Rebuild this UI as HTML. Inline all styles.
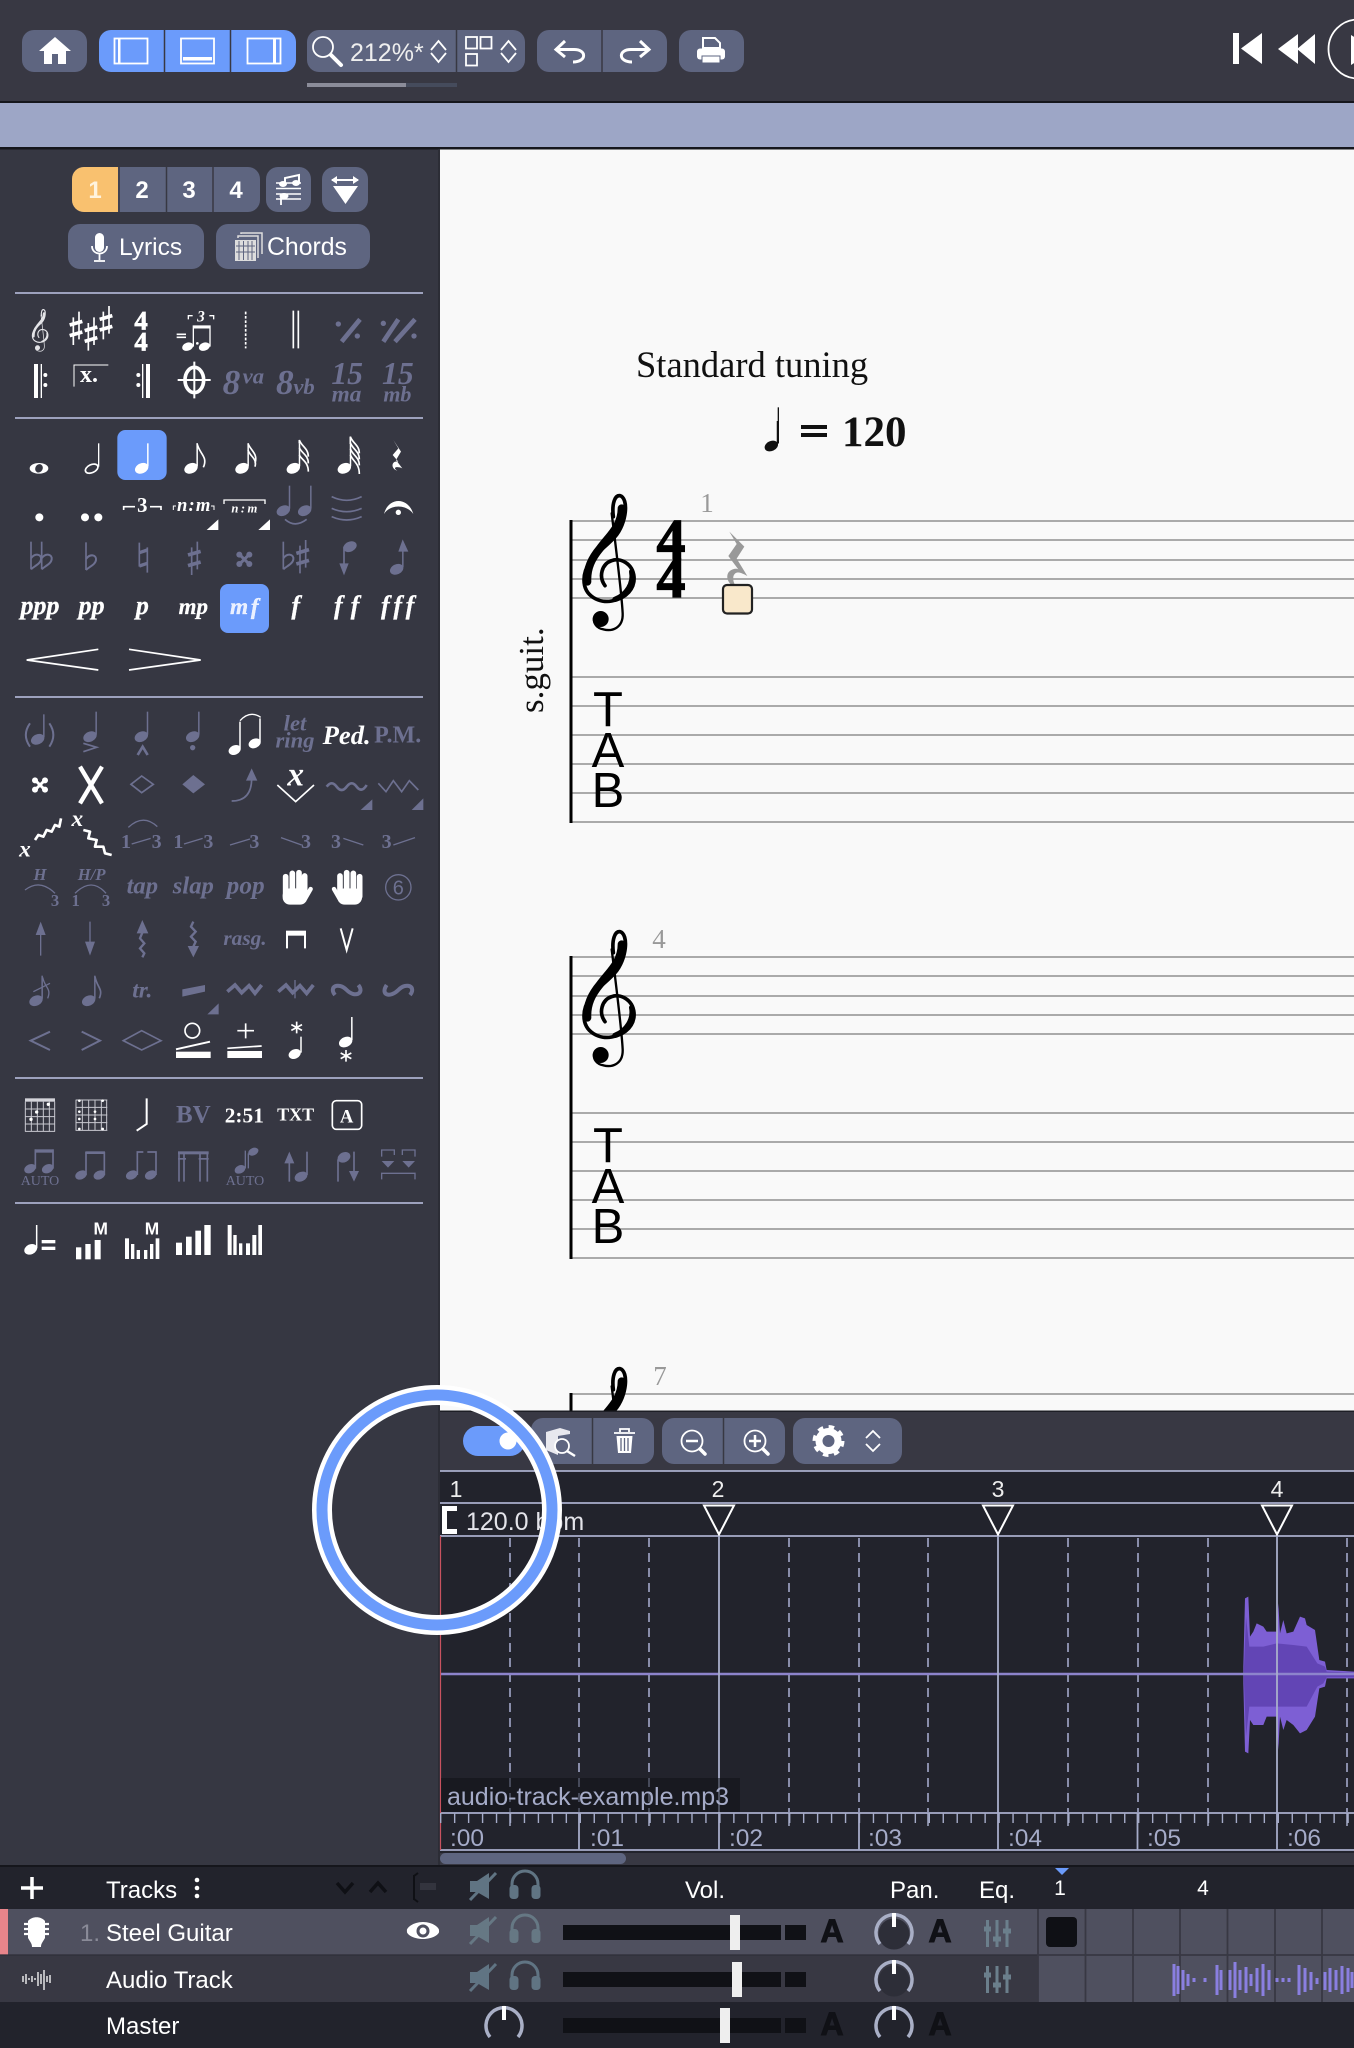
<!DOCTYPE html>
<html><head><meta charset="utf-8"><style>
html,body{margin:0;padding:0;background:#363742}
svg{display:block;filter:blur(.35px)}
text{font-family:"Liberation Sans",sans-serif}
.f,.f text{font-family:"Liberation Serif",serif}
.bi,.bi text{font-family:"Liberation Serif",serif;font-style:italic;font-weight:bold}
.b,.b text{font-family:"Liberation Serif",serif;font-weight:bold}
</style></head><body>
<svg width="1354" height="2048" viewBox="0 0 1354 2048" xmlns="http://www.w3.org/2000/svg">
<defs>
<g id="clef" fill="none" stroke="currentColor" stroke-linecap="round">
<path d="M400 590C395 550 405 525 420 527C447 535 440 610 405 650C370 690 312 720 312 780C312 830 360 850 395 843C440 835 465 805 462 770C458 730 420 712 395 722C365 732 355 770 375 797" stroke-width="11"/>
<path d="M425 565C425 620 385 650 360 685C335 715 320 745 322 785" stroke-width="24"/>
<path d="M455 755C462 790 440 825 405 838" stroke-width="16"/>
<path d="M395 580C405 660 425 820 428 880C430 925 395 935 370 928C350 925 340 910 342 895" stroke-width="7"/>
<circle cx="362" cy="897" r="24" fill="currentColor" stroke="none"/>
</g>
<g id="n"><ellipse rx="21" ry="15" transform="rotate(-25)" fill="currentColor"/><path d="M18.500 -6V-75" stroke="currentColor" stroke-width="4.500"/></g>
<g id="sh" fill="none" stroke="currentColor"><path d="M-8 -33V50M9 -50V33" stroke-width="5"/><path d="M-19 -10L19 -21M-19 22L19 11" stroke-width="11"/></g>
<g id="fl" fill="none" stroke="currentColor"><path d="M0 -45V38" stroke-width="5"/><path d="M0 5C12 -12 32 -8 30 8C28 22 10 28 0 38" stroke-width="6"/></g>
<g id="dx" fill="currentColor"><path d="M-15 -15L15 15M15 -15L-15 15" stroke="currentColor" stroke-width="9"/><circle cx="-15" cy="-14" r="9"/><circle cx="15" cy="-14" r="9"/><circle cx="-15" cy="14" r="9"/><circle cx="15" cy="14" r="9"/></g>
<g id="spk"><path d="M-13 -6H-6L6 -14V12L-6 5H-13Z" fill="currentColor"/><path d="M-13 13L13 -14" stroke="currentColor" stroke-width="3"/></g>
<g id="hp"><path d="M-13 6V-1A12.500 12.500 0 0 1 13 -1V6" fill="none" stroke="currentColor" stroke-width="3"/><rect x="-15.500" y="0" width="9" height="14" rx="3.500" fill="currentColor"/><rect x="6.500" y="0" width="9" height="14" rx="3.500" fill="currentColor"/></g>
<g id="eq" stroke="currentColor" stroke-width="3"><path d="M-9.500 -13V14M0 -13V14M10 -13V14"/><path d="M-13 -4H-6M-4 6H4M6 -2H14" stroke-width="5"/></g>
<g id="knob"><path d="M-14 12A18 18 0 1 1 14 12" fill="none" stroke="#a9afc6" stroke-width="3.500"/><path d="M0 -19V-5" stroke="#fff" stroke-width="4"/></g>
</defs>

<rect width="1354" height="2048" fill="#363742"/>
<!-- score page -->
<rect x="440" y="149" width="914" height="1262" fill="#f9f9f9"/>
<g stroke="#8f8f8f" stroke-width="1.400">
<path d="M571 521H1354M571 540H1354M571 560H1354M571 579H1354M571 598H1354M571 677H1354M571 706H1354M571 735H1354M571 764H1354M571 793H1354M571 822H1354"/>
<path d="M571 957H1354M571 976H1354M571 996H1354M571 1015H1354M571 1034H1354M571 1113H1354M571 1142H1354M571 1171H1354M571 1200H1354M571 1229H1354M571 1258H1354"/>
<path d="M571 1394H1354"/>
</g>
<path d="M571 520V823M571 956V1259M571 1393V1412" stroke="#000" stroke-width="3"/>
<text class="f" x="636" y="377" font-size="36.500" fill="#111">Standard tuning</text>
<g transform="translate(480,320) scale(.33333)"><use href="#n" x="874" y="378" color="#111"/><path d="M895 262V370" stroke="#111" stroke-width="4"/></g>
<path d="M801 427H827M801 435H827" stroke="#111" stroke-width="4"/>
<text class="b" x="842" y="446" font-size="43" fill="#111">120</text>
<text class="f" x="707" y="512" font-size="27" fill="#999" text-anchor="middle">1</text>
<g transform="translate(480,320) scale(.33333)"><use href="#clef" color="#000"/></g>
<g transform="translate(480,756) scale(.33333)"><use href="#clef" color="#000"/></g>
<g transform="translate(480,1193) scale(.33333)"><use href="#clef" color="#000"/></g>
<text class="b" x="671" y="559" font-size="58" text-anchor="middle" fill="#000" stroke="#000" stroke-width="1.200">4</text>
<text class="b" x="671" y="597" font-size="58" text-anchor="middle" fill="#000" stroke="#000" stroke-width="1.200">4</text>
<g transform="translate(480,320) scale(.33333)"><path d="M748 635L793 680L770 716L802 768C780 755 765 752 760 770C758 785 765 797 772 803C750 800 735 775 745 758C755 745 770 745 775 748L745 708L770 672Z" fill="#999"/></g>
<rect x="723" y="585" width="29" height="28.500" rx="4" fill="#f9e8cb" stroke="#222" stroke-width="2.200"/>
<text class="f" transform="translate(543,713) rotate(-90)" font-size="35" fill="#111">s.guit.</text>
<g font-size="49" fill="#000" text-anchor="middle"><text x="608" y="726">T</text><text x="608" y="767">A</text><text x="608" y="807">B</text></g>
<text class="f" x="659" y="948" font-size="27" fill="#999" text-anchor="middle">4</text>
<g font-size="49" fill="#000" text-anchor="middle"><text x="608" y="1162">T</text><text x="608" y="1203">A</text><text x="608" y="1243">B</text></g>
<text class="f" x="660" y="1385" font-size="27" fill="#999" text-anchor="middle">7</text>

<!-- top bars -->
<rect width="1354" height="101" fill="#383843"/>
<rect y="101" width="1354" height="2" fill="#15161c"/>
<rect y="103" width="1354" height="44" fill="#9da6c6"/>
<rect y="147" width="1354" height="2.500" fill="#15161c"/>
<rect x="438" y="149" width="2" height="1716" fill="#2c2d36"/>

<!-- top toolbar -->
<rect x="22" y="30" width="65" height="42" rx="12" fill="#5e6580"/>
<path d="M55 37L71 51H66V64H58V54H52V64H44V51H39Z" fill="#fff"/>
<rect x="99" y="30" width="197" height="42" rx="12" fill="#6b9bfb"/>
<path d="M164.500 30V72M230.500 30V72" stroke="#383843" stroke-width="1.500"/>
<g fill="none" stroke="#fff" stroke-width="1.800">
<rect x="114.500" y="38.500" width="33" height="25"/><rect x="181" y="38.500" width="33" height="25"/><rect x="247.500" y="38.500" width="33" height="25"/>
</g>
<rect x="118" y="39" width="2.500" height="24" fill="#fff"/><rect x="183" y="57" width="29" height="3.500" fill="#fff"/><rect x="273" y="39" width="3" height="24" fill="#fff"/>
<rect x="307" y="30" width="218" height="42" rx="12" fill="#5e6580"/>
<path d="M456.500 30V72" stroke="#383843" stroke-width="1.500"/>
<circle cx="323" cy="47" r="10" fill="none" stroke="#fff" stroke-width="1.800"/>
<path d="M331 55L341 65" stroke="#fff" stroke-width="4" stroke-linecap="round"/>
<text x="350" y="61" font-size="25" fill="#eee">212%*</text>
<g fill="none" stroke="#fff" stroke-width="1.800">
<path d="M431 50L438.500 41L446 50M431 53L438.500 62L446 53"/>
<rect x="466" y="37" width="11" height="11.500"/><rect x="480.500" y="37" width="11" height="11.500"/><rect x="466" y="54" width="11" height="11.500"/>
<path d="M501 50L508.500 41L516 50M501 53L508.500 62L516 53"/>
</g>
<rect x="537" y="30" width="130" height="42" rx="12" fill="#5e6580"/>
<path d="M602 30V72" stroke="#383843" stroke-width="1.500"/>
<g fill="none" stroke="#fff" stroke-width="3">
<path d="M565 41L556 49.500L565 57M556 49.500H574C587 49.500 587 62 573 62"/>
<path d="M640 41L649 49.500L640 57M649 49.500H631C618 49.500 618 62 632 62"/>
</g>
<rect x="679" y="30" width="65" height="42" rx="12" fill="#5e6580"/>
<path d="M703 38H715L720 43V48H703Z" fill="none" stroke="#fff" stroke-width="2"/><rect x="697" y="48.500" width="28" height="11" rx="3" fill="#fff"/><rect x="702" y="56" width="18" height="7" fill="#fff" stroke="#5e6580" stroke-width="1"/>
<rect x="307" y="83" width="99" height="4" fill="#8b8c99"/><rect x="406" y="83" width="51" height="4" fill="#454b5c"/>
<!-- transport -->
<rect x="1233" y="33" width="6" height="31" fill="#fff"/><path d="M1262 33V64L1241 48.500Z" fill="#fff"/>
<path d="M1298 34V64L1278 49ZM1315 34V64L1297 49Z" fill="#fff"/>
<circle cx="1358" cy="49" r="29.500" fill="none" stroke="#fff" stroke-width="1.800"/>
<path d="M1351 35L1375 50L1351 65Z" fill="#fff"/>

<!-- sidebar head -->
<rect x="72" y="167" width="188" height="45" rx="12" fill="#5e6580"/>
<path d="M84 167H118V212H84A12 12 0 0 1 72 200V179A12 12 0 0 1 84 167Z" fill="#f9c16f"/>
<path d="M119 167V212M166.500 167V212M213 167V212" stroke="#383843" stroke-width="1.500"/>
<g font-size="24" font-weight="bold" fill="#fff" text-anchor="middle"><text x="95" y="198" fill="#fff3dd">1</text><text x="142" y="198">2</text><text x="189" y="198">3</text><text x="236" y="198">4</text></g>
<rect x="266" y="167" width="45" height="45" rx="12" fill="#5e6580"/>
<g stroke="#fff"><path d="M276 183H301M276 188.500H301M276 194H301M276 199H301" stroke-width="1.500"/><path d="M285 184V178L299 175V183" fill="none" stroke-width="2"/><ellipse cx="283" cy="184" rx="3.500" ry="2.500" fill="#fff"/><ellipse cx="296" cy="183" rx="3.500" ry="2.500" fill="#fff"/><path d="M281 205V197" stroke-width="1.800"/><ellipse cx="284" cy="196" rx="4" ry="2.500" fill="#fff"/></g>
<rect x="322" y="167" width="46" height="45" rx="12" fill="#5e6580"/>
<path d="M332 180H358" stroke="#fff" stroke-width="2"/><path d="M331 180L337 176V184ZM359 180L353 176V184ZM333 186H358L345.500 204Z" fill="#fff"/>
<rect x="68" y="224" width="136" height="45" rx="12" fill="#5e6580"/>
<rect x="216" y="224" width="154" height="45" rx="12" fill="#5e6580"/>
<rect x="95" y="233" width="9" height="19" rx="4.500" fill="#fff"/><path d="M92 246C92 256 107 256 107 246M99.500 254V260M94 261H105" fill="none" stroke="#fff" stroke-width="1.800"/>
<text x="119" y="255" font-size="24.500" fill="#fff">Lyrics</text>
<rect x="235" y="240" width="21" height="21" fill="#ddd"/><path d="M239 241V260M243.500 241V260M248 241V260M252 241V260M236 246H255M236 252H255" stroke="#5e6580" stroke-width="1"/><path d="M238 238V236H258V258M241 234V233H262V254" fill="none" stroke="#ddd" stroke-width="1.500"/>
<text x="267" y="255" font-size="24.800" fill="#fff">Chords</text>
<path d="M15 293H423M15 418H423M15 697H423M15 1078H423M15 1203H423" stroke="#9da1bd" stroke-width="2"/>

<!-- palette section 1-2 -->
<g transform="translate(0,280) scale(.33333)">
<use href="#clef" transform="translate(0.400,-74.700) scale(.31)" color="#e4e4e8"/>
<use href="#sh" x="228" y="145" color="#fff"/><use href="#sh" x="273" y="162" color="#fff"/><use href="#sh" x="318" y="128" color="#fff"/>
<g class="b" font-size="80" fill="#fff" text-anchor="middle" stroke="#fff" stroke-width="2"><text x="423" y="148">4</text><text x="423" y="212">4</text></g>
<g fill="none" stroke="#fff"><path d="M530 163H558M530 172H558" stroke-width="5"/><path d="M580 200V138H630V200" stroke-width="4"/><path d="M580 141H630" stroke-width="9"/><path d="M565 118V107H578M628 107H641V118" stroke-width="4"/></g>
<ellipse cx="563" cy="200" rx="17" ry="12" transform="rotate(-20 563 200)" fill="#fff"/><ellipse cx="613" cy="200" rx="17" ry="12" transform="rotate(-20 613 200)" fill="#fff"/><circle cx="592" cy="190" r="4" fill="#fff"/>
<text class="bi" x="603" y="124" font-size="46" fill="#fff" text-anchor="middle">3</text>
<path d="M737 95V205" stroke="#fff" stroke-width="5" stroke-dasharray="8 5"/>
<path d="M880 92V205M895 92V205" stroke="#fff" stroke-width="5"/>
<g stroke="#6d7090" stroke-width="14"><path d="M1025 185L1080 118M1150 185L1195 118M1185 185L1245 118"/></g>
<g fill="#6d7090"><circle cx="1015" cy="132" r="8"/><circle cx="1072" cy="168" r="8"/><circle cx="1150" cy="130" r="8"/><circle cx="1242" cy="168" r="8"/></g>
<rect x="102" y="252" width="12" height="102" fill="#fff"/><rect x="122" y="252" width="4" height="102" fill="#fff"/><circle cx="136" cy="285" r="6" fill="#fff"/><circle cx="136" cy="315" r="6" fill="#fff"/>
<path d="M222 320V255H325" fill="none" stroke="#fff" stroke-width="3"/>
<text class="b" x="240" y="306" font-size="72" fill="#fff">x.</text>
<circle cx="415" cy="285" r="6" fill="#fff"/><circle cx="415" cy="315" r="6" fill="#fff"/><rect x="426" y="252" width="4" height="102" fill="#fff"/><rect x="438" y="252" width="12" height="102" fill="#fff"/>
<ellipse cx="583" cy="300" rx="28" ry="38" fill="none" stroke="#fff" stroke-width="11"/><path d="M583 245V355M533 300H632" stroke="#fff" stroke-width="6"/>
<g class="bi" fill="#6d7090"><text x="668" y="342" font-size="106">8</text><text x="728" y="310" font-size="68">va</text>
<text x="828" y="342" font-size="106">8</text><text x="880" y="342" font-size="68">vb</text>
<text x="994" y="312" font-size="95">15</text><text x="995" y="365" font-size="70">ma</text>
<text x="1146" y="312" font-size="95">15</text><text x="1150" y="365" font-size="66">mb</text></g>

<ellipse cx="117" cy="565" rx="28" ry="16" fill="#fff"/><ellipse cx="117" cy="565" rx="11" ry="13" transform="rotate(30 117 565)" fill="#363742"/>
<ellipse cx="275" cy="566" rx="20" ry="12" transform="rotate(-25 275 566)" fill="none" stroke="#fff" stroke-width="5"/><path d="M296 490V560" stroke="#fff" stroke-width="4"/>
<rect x="352" y="450" width="148" height="150" rx="24" fill="#6b9bfb"/>
<use href="#n" x="425" y="565" color="#fff"/>
<use href="#n" x="573" y="565" color="#fff"/><path d="M591 490C598 522 625 530 610 562" fill="none" stroke="#fff" stroke-width="5"/>
<use href="#n" x="726" y="565" color="#fff"/><path d="M744 490C750 510 775 520 765 550M744 510C750 530 772 535 765 560" fill="none" stroke="#fff" stroke-width="5"/>
<use href="#n" x="880" y="565" color="#fff"/><path d="M898 490V480C905 500 925 505 925 530M898 503C905 520 925 525 925 550M898 525C905 540 925 545 925 575" fill="none" stroke="#fff" stroke-width="5"/>
<use href="#n" x="1033" y="565" color="#fff"/><path d="M1051 492V470C1058 490 1078 495 1078 520M1051 488C1058 508 1078 513 1078 538M1051 506C1058 526 1078 531 1078 556M1051 524C1058 544 1078 549 1078 582" fill="none" stroke="#fff" stroke-width="5"/>
<path d="M1180 480L1203 515L1188 540L1207 565C1192 558 1175 562 1192 572C1170 565 1175 540 1195 545L1178 525L1195 505Z" fill="#fff"/>

<circle cx="118" cy="712" r="12" fill="#fff"/><circle cx="255" cy="712" r="12" fill="#fff"/><circle cx="295" cy="712" r="12" fill="#fff"/>
<path d="M371 690V680H405M450 680H483V690" fill="none" stroke="#fff" stroke-width="5"/>
<text class="b" x="427" y="696" font-size="62" fill="#fff" text-anchor="middle">3</text>
<text class="bi" x="581" y="693" font-size="56" fill="#fff" text-anchor="middle" textLength="100" lengthAdjust="spacing">n:m</text>
<path d="M520 690V678H528M633 678H642V690" fill="none" stroke="#fff" stroke-width="3"/>
<path d="M620 750H655V718Z" fill="#fff"/>
<path d="M672 672V660H795V672" fill="none" stroke="#fff" stroke-width="4"/>
<text class="bi" x="733" y="698" font-size="38" fill="#fff" text-anchor="middle" textLength="78" lengthAdjust="spacing">n:m</text>
<path d="M775 750H810V718Z" fill="#fff"/>
<use href="#n" x="850" y="692" color="#6d7090"/><use href="#n" x="914" y="692" color="#6d7090"/>
<g fill="none" stroke="#6d7090" stroke-width="5"><path d="M855 718Q885 745 920 718M995 650Q1040 672 1085 650M995 685Q1040 705 1085 685M995 710Q1040 730 1085 710"/></g>
<path d="M1152 702C1165 650 1225 650 1240 702C1220 672 1170 672 1152 702Z" fill="#fff"/><circle cx="1195" cy="697" r="8" fill="#fff"/>

<use href="#fl" x="93" y="830" color="#6d7090"/><use href="#fl" x="125" y="830" color="#6d7090"/><use href="#fl" x="258" y="832" color="#6d7090"/>
<g stroke="#6d7090" fill="none"><path d="M418 788V860M442 802V878" stroke-width="5"/><path d="M418 818L442 810M418 858L442 850" stroke-width="10"/></g>
<use href="#sh" x="583" y="835" color="#6d7090"/>
<use href="#dx" x="733" y="838" color="#6d7090"/>
<use href="#fl" x="850" y="830" color="#6d7090"/><use href="#sh" x="908" y="830" color="#6d7090"/>
<ellipse cx="1050" cy="800" rx="21" ry="15" transform="rotate(-25 1050 800)" fill="#6d7090"/><path d="M1032 800V860" stroke="#6d7090" stroke-width="5"/><path d="M1018 850H1046L1032 886Z" fill="#6d7090"/>
<use href="#n" x="1190" y="868" color="#6d7090"/><path d="M1195 815H1225L1208 778Z" fill="#6d7090"/>

<rect x="660" y="912" width="147" height="147" rx="24" fill="#6b9bfb"/>
<g class="bi" font-size="78" fill="#fff" text-anchor="middle" stroke="#fff" stroke-width=".8"><text x="120" y="1002">ppp</text><text x="275" y="1002">pp</text><text x="427" y="1002">p</text><text x="580" y="1002" font-size="69">mp</text><text x="733" y="1002" font-size="70" fill="#eaf0ff" textLength="86" lengthAdjust="spacing">mf</text><text x="887" y="1002">f</text><text x="1040" y="1002" textLength="76" lengthAdjust="spacing">ff</text><text x="1193" y="1002" textLength="100" lengthAdjust="spacing">fff</text></g>
<g fill="none" stroke="#fff" stroke-width="5"><path d="M295 1108L80 1140L295 1170M387 1108L602 1140L387 1170"/></g>
</g>

<!-- palette section 3 -->
<g transform="translate(0,690) scale(.33333)">
<path d="M90 100Q65 135 90 170M148 100Q172 135 148 170" fill="none" stroke="#6d7090" stroke-width="6"/>
<use href="#n" x="113" y="148" color="#6d7090"/>
<use href="#n" x="270" y="140" color="#6d7090"/><path d="M250 160L290 172L250 185" fill="none" stroke="#6d7090" stroke-width="5"/>
<use href="#n" x="424" y="140" color="#6d7090"/><path d="M413 195L428 170L443 195" fill="none" stroke="#6d7090" stroke-width="8"/>
<use href="#n" x="578" y="140" color="#6d7090"/><circle cx="578" cy="173" r="8" fill="#6d7090"/>
<ellipse cx="704" cy="180" rx="19" ry="14" transform="rotate(-25 704 180)" fill="#fff"/><ellipse cx="764" cy="160" rx="19" ry="14" transform="rotate(-25 764 160)" fill="#fff"/><path d="M720 175V95M780 155V85" stroke="#fff" stroke-width="4.500"/><path d="M720 92Q750 60 782 82" fill="none" stroke="#fff" stroke-width="4"/>
<g class="bi" fill="#6d7090" text-anchor="middle"><text x="885" y="122" font-size="68">let</text><text x="885" y="173" font-size="68">ring</text></g>
<text class="bi" x="1040" y="162" font-size="80" fill="#fff" text-anchor="middle">Ped.</text>
<text class="b" x="1193" y="157" font-size="72" fill="#6d7090" text-anchor="middle">P.M.</text>

<use href="#dx" x="120" y="285" color="#fff"/>
<path d="M240 230L306 340M306 230L240 340" stroke="#fff" stroke-width="13"/>
<path d="M393 283L425 258L460 283L425 308Z" fill="none" stroke="#6d7090" stroke-width="5"/>
<path d="M547 283L580 255L615 283L580 310Z" fill="#6d7090"/>
<path d="M695 333C735 333 755 310 755 265" fill="none" stroke="#6d7090" stroke-width="5"/><path d="M738 272H772L755 235Z" fill="#6d7090"/>
<text class="bi" x="887" y="287" font-size="100" fill="#fff" text-anchor="middle">x</text><path d="M832 285L887 335L942 285" fill="none" stroke="#fff" stroke-width="5"/>
<path d="M980 290Q995 270 1010 290T1040 290T1070 290T1100 285" fill="none" stroke="#6d7090" stroke-width="8"/><path d="M1082 360H1117V328Z" fill="#6d7090"/>
<path d="M1135 280L1158 305L1180 272L1205 305L1228 272L1255 300" fill="none" stroke="#6d7090" stroke-width="5"/><path d="M1235 360H1270V325Z" fill="#6d7090"/>

<text class="bi" x="75" y="500" font-size="70" fill="#fff" text-anchor="middle">x</text><text class="bi" x="232" y="408" font-size="70" fill="#fff" text-anchor="middle">x</text>
<path d="M105 450L115 435L130 440L140 420L155 425L165 405L178 410L183 385M250 420L270 425L265 445L290 450L285 470L310 470L315 490L335 495" fill="none" stroke="#fff" stroke-width="8" stroke-linejoin="round"/>
<g fill="none" stroke="#6d7090" stroke-width="4"><path d="M385 412Q430 370 472 410M395 462L452 445M552 462L608 445M690 465L750 447M843 443L905 465M1030 445L1090 465M1180 465L1245 443"/></g>
<g class="b" font-size="60" fill="#6d7090" text-anchor="middle"><text x="378" y="474">1</text><text x="470" y="474">3</text><text x="535" y="474">1</text><text x="625" y="474">3</text><text x="763" y="474">3</text><text x="918" y="474">3</text><text x="1008" y="474">3</text><text x="1160" y="474">3</text></g>

<g class="bi" fill="#6d7090" text-anchor="middle"><text x="120" y="570" font-size="50">H</text><text x="275" y="570" font-size="50">H/P</text><text x="427" y="610" font-size="74">tap</text><text x="580" y="610" font-size="74">slap</text><text x="737" y="610" font-size="76">pop</text></g>
<path d="M75 600Q120 565 165 610M225 610Q275 560 318 610" fill="none" stroke="#6d7090" stroke-width="4"/>
<g class="b" font-size="50" fill="#6d7090" text-anchor="middle"><text x="165" y="648">3</text><text x="227" y="648">1</text><text x="318" y="648">3</text></g>
<g stroke="#fff" stroke-linecap="round" fill="#fff"><path d="M857 560V620M877 550V620M897 548V620M914 558V620" stroke-width="17"/><rect x="848" y="595" width="74" height="49" rx="22" stroke="none"/><path d="M916 625L932 597" stroke-width="13"/>
<path d="M1020 558V620M1040 548V620M1060 550V620M1079 560V620" stroke-width="17"/><rect x="1012" y="595" width="74" height="49" rx="22" stroke="none"/><path d="M1018 625L1002 597" stroke-width="13"/></g>
<circle cx="1195" cy="592" r="38" fill="none" stroke="#6d7090" stroke-width="4"/>
<text x="1195" y="614" font-size="60" fill="#6d7090" text-anchor="middle">6</text>

<g stroke="#6d7090" stroke-width="4" fill="none"><path d="M122 730V797M270 695V760"/><path d="M427 728L420 745L433 760L420 775L433 790L427 802M580 695L573 710L587 725L573 740L587 755L580 770" stroke-width="7"/></g>
<g fill="#6d7090"><path d="M107 735H137L122 695ZM255 755H285L270 797ZM410 730H445L427 690ZM563 768H597L580 802Z"/></g>
<text class="bi" x="735" y="765" font-size="64" fill="#6d7090" text-anchor="middle">rasg.</text>
<rect x="858" y="722" width="60" height="15" fill="#fff"/><path d="M861 725V775M915 725V775" stroke="#fff" stroke-width="6"/>
<path d="M1022 715L1040 780L1058 715" fill="none" stroke="#fff" stroke-width="6"/>

<use href="#n" x="108" y="932" color="#6d7090"/><path d="M128 862C135 895 155 895 143 925M100 905L150 880" fill="none" stroke="#6d7090" stroke-width="4"/>
<use href="#n" x="266" y="932" color="#6d7090"/><path d="M285 860C292 895 310 895 298 925" fill="none" stroke="#6d7090" stroke-width="5"/>
<text class="bi" x="427" y="922" font-size="70" fill="#6d7090" text-anchor="middle">tr.</text>
<path d="M547 898L615 885V905L547 920ZM622 973H656V940Z" fill="#6d7090"/>
<g fill="none" stroke="#6d7090"><path d="M682 905L705 885L725 908L747 887L765 910L785 885M835 905L858 885L878 908L900 887L920 910L940 885" stroke-width="11"/><path d="M885 870V925" stroke-width="4"/>
<path d="M1005 915C985 890 1015 875 1040 900C1065 925 1095 910 1075 885M1160 885C1140 915 1170 925 1195 900C1220 875 1250 890 1230 915" stroke-width="12"/>
<path d="M150 1025L92 1052L150 1080M245 1025L300 1052L245 1080" stroke-width="6"/><path d="M370 1052L425 1022L483 1052L425 1080Z" stroke-width="5"/></g>
<circle cx="577" cy="1022" r="22" fill="none" stroke="#fff" stroke-width="5"/>
<path d="M528 1078L630 1055" stroke="#fff" stroke-width="6"/><rect x="528" y="1085" width="104" height="19" fill="#fff"/>
<path d="M712 1022H762M737 1000V1045" stroke="#fff" stroke-width="5"/>
<path d="M682 1075L785 1068" stroke="#fff" stroke-width="5"/><rect x="682" y="1083" width="104" height="21" fill="#fff"/>
<path d="M890 995V1030M874 1004L906 1021M906 1004L874 1021" stroke="#fff" stroke-width="5"/>
<ellipse cx="884" cy="1092" rx="19" ry="14" transform="rotate(-25 884 1092)" fill="#fff"/><path d="M903 1040V1088" stroke="#fff" stroke-width="4.500"/>
<path d="M1038 1080V1115M1022 1089L1054 1106M1054 1089L1022 1106" stroke="#fff" stroke-width="5"/>
<use href="#n" x="1037" y="1056" color="#fff"/>
</g>

<!-- palette section 4 -->
<g transform="translate(0,1060) scale(.33333)">
<rect x="75" y="115" width="90" height="10" fill="#d4d4da"/>
<path d="M76 125V215M94 125V215M112 125V215M130 125V215M148 125V215M164 125V215M75 147H165M75 170H165M75 192H165M75 214H165" stroke="#c8c8d0" stroke-width="3"/>
<circle cx="145" cy="133" r="5" fill="#fff"/><circle cx="110" cy="156" r="5" fill="#fff"/><circle cx="93" cy="178" r="5" fill="#fff"/>
<path d="M228 120V212M247 120V212M266 120V212M285 120V212M304 120V212M320 120V212M227 120H322M227 142H322M227 165H322M227 188H322M227 211H322" stroke="#c8c8d0" stroke-width="3"/>
<g fill="#fff"><circle cx="238" cy="122" r="4"/><circle cx="308" cy="122" r="4"/><circle cx="238" cy="155" r="4"/><circle cx="285" cy="155" r="4"/><circle cx="238" cy="177" r="4"/><circle cx="285" cy="177" r="4"/><circle cx="238" cy="207" r="4"/><circle cx="308" cy="207" r="4"/></g>
<path d="M410 212L440 192V115" fill="none" stroke="#fff" stroke-width="6"/>
<text class="b" x="580" y="188" font-size="75" fill="#6d7090" text-anchor="middle">BV</text>
<text class="b" x="733" y="187" font-size="64" fill="#fff" text-anchor="middle">2:51</text>
<text class="b" x="887" y="182" font-size="54" fill="#fff" text-anchor="middle">TXT</text>
<rect x="997" y="122" width="88" height="86" rx="12" fill="none" stroke="#fff" stroke-width="5"/>
<text class="b" x="1040" y="187" font-size="56" fill="#fff" text-anchor="middle">A</text>

<g fill="#6d7090" stroke="#6d7090">
<ellipse cx="90" cy="326" rx="18" ry="13" transform="rotate(-25 90 326)" stroke="none"/><ellipse cx="143" cy="326" rx="18" ry="13" transform="rotate(-25 143 326)" stroke="none"/><path d="M106 326V268M159 326V268" stroke-width="5" fill="none"/><rect x="104" y="268" width="57" height="10" stroke="none"/>
<ellipse cx="243" cy="345" rx="18" ry="13" transform="rotate(-25 243 345)" stroke="none"/><ellipse cx="298" cy="345" rx="18" ry="13" transform="rotate(-25 298 345)" stroke="none"/><path d="M258 345V276M313 345V276" stroke-width="5" fill="none"/><rect x="256" y="274" width="59" height="8" stroke="none"/>
<ellipse cx="395" cy="345" rx="18" ry="13" transform="rotate(-25 395 345)" stroke="none"/><ellipse cx="452" cy="345" rx="18" ry="13" transform="rotate(-25 452 345)" stroke="none"/><path d="M412 345V276H430M468 345V276H442" stroke-width="5" fill="none"/>
<path d="M537 365V276M552 365V276M600 365V276M622 365V276" stroke-width="5" fill="none"/><rect x="534" y="274" width="92" height="9" stroke="none"/><rect x="534" y="294" width="24" height="5" stroke="none"/><rect x="596" y="294" width="30" height="5" stroke="none"/>
<ellipse cx="720" cy="328" rx="17" ry="12" transform="rotate(-25 720 328)" stroke="none"/><path d="M736 325V272M745 325V280" stroke-width="4" fill="none"/><ellipse cx="760" cy="275" rx="16" ry="11" transform="rotate(-25 760 275)" stroke="none"/>
<path d="M868 365V300" stroke-width="5" fill="none"/><path d="M853 310H883L868 275Z" stroke="none"/><ellipse cx="903" cy="350" rx="20" ry="14" transform="rotate(-25 903 350)" stroke="none"/><path d="M921 345V275" stroke-width="5" fill="none"/>
<ellipse cx="1032" cy="292" rx="20" ry="15" transform="rotate(-25 1032 292)" stroke="none"/><path d="M1014 298V365M1062 275V340" stroke-width="5" fill="none"/><path d="M1047 333H1077L1062 365Z" stroke="none"/>
<path d="M1145 290V270H1183V285M1207 285V270H1245V290M1145 358V340H1245V358" stroke-width="4" fill="none"/><path d="M1145 303H1183L1164 323ZM1207 303H1245L1226 323Z" stroke="none"/>
</g>
<g class="f" font-size="42" fill="#6d7090" text-anchor="middle"><text x="120" y="375">AUTO</text><text x="735" y="375">AUTO</text></g>

<ellipse cx="92" cy="568" rx="20" ry="15" transform="rotate(-25 92 568)" fill="#fff"/><path d="M110 565V495" stroke="#fff" stroke-width="4.500"/><rect x="125" y="540" width="41" height="10" fill="#fff"/><rect x="125" y="560" width="41" height="10" fill="#fff"/>
<g font-size="52" font-weight="bold" fill="#fff" text-anchor="middle"><text x="302" y="524">M</text><text x="456" y="524">M</text></g>
<g fill="#fff"><rect x="228" y="562" width="16" height="36"/><rect x="256" y="552" width="16" height="46"/><rect x="284" y="540" width="18" height="58"/>
<rect x="375" y="535" width="12" height="62"/><rect x="393" y="552" width="10" height="45"/><rect x="410" y="570" width="10" height="27"/><rect x="432" y="570" width="10" height="27"/><rect x="450" y="552" width="10" height="45"/><rect x="467" y="535" width="11" height="62"/>
<rect x="528" y="548" width="18" height="37"/><rect x="558" y="530" width="17" height="55"/><rect x="586" y="512" width="17" height="73"/><rect x="613" y="495" width="19" height="90"/>
<rect x="683" y="495" width="12" height="90"/><rect x="700" y="525" width="10" height="60"/><rect x="717" y="550" width="10" height="35"/><rect x="738" y="550" width="12" height="35"/><rect x="757" y="525" width="12" height="60"/><rect x="775" y="495" width="11" height="90"/></g>
</g>

<!-- lower panel -->
<rect x="440" y="1411" width="914" height="454" fill="#383843"/>
<rect x="440" y="1410.500" width="914" height="1.500" fill="#1d1e25"/>
<rect x="463" y="1426" width="62" height="30" rx="15" fill="#6b9bfb"/><circle cx="508" cy="1441" r="8.500" fill="#fff"/>
<rect x="531" y="1418" width="123" height="46" rx="12" fill="#5e6580"/><path d="M592.500 1418V1464" stroke="#383843" stroke-width="1.500"/>
<path d="M546 1432L560 1428L570 1431V1434L558 1436V1455L546 1450Z" fill="#e8e8ee"/>
<circle cx="562" cy="1446" r="7" fill="#5e6580" stroke="#fff" stroke-width="1.800"/><path d="M567 1451L575 1456" stroke="#fff" stroke-width="2.500"/>
<path d="M614 1433H635M620 1432V1429H629V1432" fill="none" stroke="#fff" stroke-width="1.800"/><path d="M616.500 1436H632.500L631 1453H618Z" fill="#fff"/><path d="M621 1438V1451M624.500 1438V1451M628 1438V1451" stroke="#5e6580" stroke-width="1.300"/>
<rect x="662" y="1418" width="123" height="46" rx="12" fill="#5e6580"/><path d="M723.500 1418V1464" stroke="#383843" stroke-width="1.500"/>
<circle cx="692" cy="1441" r="10.500" fill="none" stroke="#fff" stroke-width="1.800"/><path d="M686 1441H698" stroke="#fff" stroke-width="2.500"/><path d="M700 1449L705 1454" stroke="#fff" stroke-width="3.500" stroke-linecap="round"/>
<circle cx="755" cy="1441" r="10.500" fill="none" stroke="#fff" stroke-width="1.800"/><path d="M749 1441H761M755 1435V1447" stroke="#fff" stroke-width="2.500"/><path d="M763 1449L768 1454" stroke="#fff" stroke-width="3.500" stroke-linecap="round"/>
<rect x="793" y="1418" width="109" height="46" rx="12" fill="#5e6580"/>
<circle cx="828.500" cy="1441" r="9.500" fill="none" stroke="#fff" stroke-width="7"/><circle cx="828.500" cy="1441" r="14" fill="none" stroke="#fff" stroke-width="4" stroke-dasharray="5.500 5.500"/>
<path d="M866 1438L873 1431L880 1438M866 1444L873 1451L880 1444" fill="none" stroke="#fff" stroke-width="1.800"/>

<rect x="440" y="1471" width="914" height="382" fill="#22232c"/>
<path d="M440 1471H1354M440 1503H1354M440 1536H1354M440 1813H1354M440 1850H1354" stroke="#a9aecb" stroke-width="1.800"/>
<g font-size="23" fill="#eee" text-anchor="middle"><text x="456" y="1497">1</text><text x="718" y="1497">2</text><text x="998" y="1497">3</text><text x="1277" y="1497">4</text></g>
<g fill="none" stroke="#fff" stroke-width="2"><path d="M704 1505.500H734L719 1534.500ZM983 1505.500H1013L998 1534.500ZM1262 1505.500H1292L1277 1534.500Z"/></g>
<rect x="442" y="1506" width="15" height="28" fill="#fff"/><rect x="447" y="1511" width="10" height="18" fill="#22232c"/>
<text x="466" y="1530" font-size="25" fill="#e4e4ea">120.0 bpm</text>
<g stroke="#9599b8" stroke-width="1.800" stroke-dasharray="9 6"><path d="M510 1538V1813M579 1538V1813M649 1538V1813M789 1538V1813M859 1538V1813M928 1538V1813M1068 1538V1813M1138 1538V1813M1208 1538V1813M1347 1538V1813"/></g>
<g transform="translate(900,1450) scale(.33333)">
<path d="M1030 650L1035 445L1045 440L1050 560L1060 545L1070 520L1090 530L1100 545L1130 545L1135 460L1140 550L1150 510L1160 550L1180 545L1200 500L1215 505L1220 525L1245 540L1258 630L1275 635L1280 660L1362 665V685L1280 685L1275 710L1258 715L1245 800L1220 840L1200 850L1180 825L1160 810L1150 840L1140 800L1135 900L1130 800L1100 800L1090 825L1060 825L1050 810L1045 910L1035 905L1030 700Z" fill="#7d5fd4"/>
<path d="M1032 650L1038 500L1048 590L1090 590L1130 580L1180 585L1220 590L1252 640L1275 650L1280 665L1362 668V682L1280 682L1270 700L1252 710L1220 770L1180 770L1130 770L1090 770L1048 770L1038 860L1032 700Z" fill="#6245b5"/>
</g>
<path d="M440 1674H1354" stroke="#8d84cc" stroke-width="2.500"/>
<path d="M719 1536V1813M998 1536V1813M1277 1536V1813" stroke="#a9aecb" stroke-width="1.800"/>
<path d="M440.500 1536V1850" stroke="#c8525f" stroke-width="1.200"/>
<rect x="441" y="1778" width="299" height="34" fill="#111218" opacity=".55"/>
<text x="447" y="1805" font-size="25" fill="#a5abc8">audio-track-example.mp3</text>
<path d="M440 1818H1354" stroke="#a5abc8" stroke-width="10" stroke-dasharray="1.400 12.560"/>
<path d="M510 1813V1826M649 1813V1826M789 1813V1826M928 1813V1826M1068 1813V1826M1208 1813V1826M1347 1813V1826" stroke="#a5abc8" stroke-width="1.500"/>
<path d="M579 1813V1850M719 1813V1850M859 1813V1850M998 1813V1850M1137.500 1813V1850M1277 1813V1850" stroke="#a5abc8" stroke-width="1.800"/>
<g font-size="24.500" fill="#a5abc8"><text x="450" y="1846">:00</text><text x="590" y="1846">:01</text><text x="729" y="1846">:02</text><text x="868" y="1846">:03</text><text x="1008" y="1846">:04</text><text x="1147" y="1846">:05</text><text x="1287" y="1846">:06</text></g>
<rect x="440" y="1853" width="186" height="11" rx="5.500" fill="#5e6580"/>

<!-- tracks -->
<rect y="1865" width="1354" height="2.500" fill="#15161c"/>
<rect y="1867" width="1354" height="42" fill="#22232c"/>
<rect y="1909" width="1354" height="46" fill="#4f505f"/>
<rect y="1955" width="1354" height="47" fill="#383843"/>
<rect y="2002" width="1354" height="46" fill="#22232c"/>
<rect y="1909" width="8" height="46" fill="#e8858b"/>
<rect x="1038" y="1955" width="316" height="47" fill="#4f505f"/>
<path d="M0 1955H1354" stroke="#2d2e38" stroke-width="1.200"/>
<path d="M1038 1909V2002M1085.500 1909V2002M1133 1909V2002M1180 1909V2002M1227.500 1909V2002M1275 1909V2002M1322 1909V2002" stroke="#383843" stroke-width="1.800"/>
<path d="M32 1877V1899M21 1888H43" stroke="#fff" stroke-width="3.500"/>
<g font-size="24" fill="#fff"><text x="106" y="1898">Tracks</text><text x="106" y="1941">Steel Guitar</text><text x="106" y="1988">Audio Track</text><text x="106" y="2034">Master</text>
<text x="685" y="1898">Vol.</text><text x="890" y="1898">Pan.</text><text x="979" y="1898">Eq.</text></g>
<text x="80" y="1941" font-size="24" fill="#8a8b98">1.</text>
<circle cx="197" cy="1880" r="2.300" fill="#fff"/><circle cx="197" cy="1888" r="2.300" fill="#fff"/><circle cx="197" cy="1896" r="2.300" fill="#fff"/>
<path d="M337 1883L345 1892L353 1883M370 1892L378 1883L386 1892" fill="none" stroke="#0f1015" stroke-width="3.500"/>
<path d="M414 1875V1900M414 1876L418 1873M414 1899L418 1902" fill="none" stroke="#0f1015" stroke-width="2"/><path d="M420 1883H436V1890H420Z" fill="#33343e"/>
<path d="M28 1925V1921C32 1916 41 1916 45 1921V1938C42 1943 41 1944 41 1947H32C32 1944 31 1943 28 1938Z" fill="#fff"/><path d="M24 1924H28M24 1929H28M24 1934H28M45 1924H49M45 1929H49M45 1934H49" stroke="#fff" stroke-width="2.200"/>
<path d="M23 1976V1982M26 1974V1984M29 1978V1980M32 1976V1982M35 1978V1980M38 1972V1986M41 1974V1984M44 1970V1990M47 1976V1982M50 1975V1983" stroke="#fff" stroke-width="1.300"/>
<path d="M423 1922C433 1922 440 1928 439 1931C440 1934 433 1939 423 1939C413 1939 406 1934 407 1931C406 1928 413 1922 423 1922Z" fill="#fff"/><circle cx="423" cy="1931" r="5" fill="none" stroke="#4f505f" stroke-width="3"/>
<use href="#spk" x="483" y="1887" color="#607483"/><use href="#hp" x="525" y="1885" color="#607483"/>
<use href="#spk" x="483" y="1931" color="#667884"/><use href="#hp" x="525" y="1929" color="#667884"/>
<use href="#spk" x="483" y="1978" color="#607483"/><use href="#hp" x="525" y="1976" color="#607483"/>
<g fill="#101116">
<rect x="563" y="1925" width="218" height="15"/><rect x="785" y="1925" width="21" height="15"/>
<rect x="563" y="1972" width="218" height="15"/><rect x="785" y="1972" width="21" height="15"/>
<rect x="563" y="2018" width="218" height="15"/><rect x="785" y="2018" width="21" height="15"/>
</g>
<g fill="#eee"><rect x="730" y="1915" width="10" height="35"/><rect x="732" y="1962" width="10" height="35"/><rect x="720" y="2008" width="10" height="35"/></g>
<g font-size="32" font-weight="bold" fill="#101116" text-anchor="middle" stroke="#101116" stroke-width="1"><text x="832" y="1942">A</text><text x="940" y="1942">A</text><text x="832" y="2035">A</text><text x="940" y="2035">A</text></g>
<circle cx="894" cy="1934" r="15.500" fill="#2d2e38"/><circle cx="894" cy="1981" r="15.500" fill="#2d2e38"/>
<use href="#knob" x="894" y="1932"/><use href="#knob" x="894" y="1979"/><use href="#knob" x="894" y="2025"/><use href="#knob" x="504" y="2025"/>
<use href="#eq" x="997" y="1933" color="#6b7f8c"/><use href="#eq" x="997" y="1979" color="#6b7f8c"/>
<g font-size="21" fill="#fff" text-anchor="middle"><text x="1060" y="1895">1</text><text x="1203" y="1895">4</text></g>
<path d="M1055 1868H1069L1062 1875Z" fill="#6b9bfb"/>
<rect x="1046" y="1917" width="31" height="30" rx="4" fill="#0f1015"/>
<g stroke="#8a7fe0">
<path d="M1174 1964V1996M1178 1966V1994M1183 1970V1990M1188 1974V1986M1194 1978V1982M1205 1978V1982M1217 1965V1995M1221 1970V1990M1230 1970V1990M1235 1962V1998M1240 1970V1990M1246 1967V1993M1251 1974V1986M1257 1968V1992M1263 1964V1996M1269 1970V1990M1277 1978V1982M1283 1978V1982M1289 1978V1982M1299 1965V1995M1305 1968V1992M1311 1972V1990M1317 1978V1984M1325 1972V1990M1330 1968V1992M1336 1970V1990M1342 1966V1994M1348 1968V1992M1352 1972V1988" stroke-width="3"/>
</g>

<!-- highlight ring -->
<circle cx="437" cy="1510" r="115" fill="none" stroke="#fff" stroke-width="20"/>
<circle cx="437" cy="1510" r="115" fill="none" stroke="#6b9bfb" stroke-width="11"/>
</svg>
</body></html>
